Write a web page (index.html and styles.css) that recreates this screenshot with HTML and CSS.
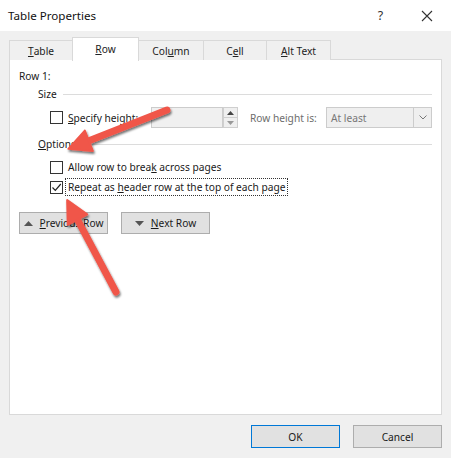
FILE: index.html
```html
<!DOCTYPE html>
<html>
<head>
<meta charset="utf-8">
<link rel="stylesheet" href="styles.css">
</head>
<body>
<div class="window">
  <div class="titlebar">
    <span class="title">Table Properties</span>
    <span class="help">?</span>
    <span class="close">
      <svg width="12" height="12" viewBox="0 0 12 12"><path d="M1 1 L11 11 M11 1 L1 11" stroke="#333" stroke-width="1.1" fill="none"/></svg>
    </span>
  </div>
  <div class="client">
    <div class="tabs">
      <div class="tab t1"><u>T</u>able</div>
      <div class="tab t2 active"><u>R</u>ow</div>
      <div class="tab t3">Col<u>u</u>mn</div>
      <div class="tab t4">C<u>e</u>ll</div>
      <div class="tab t5"><u>A</u>lt Text</div>
    </div>
    <div class="panel">
      <div class="line rowlabel">Row 1:</div>
      <div class="group"><span>Size</span><span class="rule"></span></div>
      <div class="sizerow">
        <span class="check"></span>
        <span class="lbl"><u>S</u>pecify height:</span>
        <span class="numbox"></span>
        <span class="spin">
          <span class="spinbtn"><svg width="7" height="4" viewBox="0 0 7 4"><path d="M0 4 L3.5 0 L7 4Z" fill="#444"/></svg></span>
          <span class="spinbtn"><svg width="7" height="4" viewBox="0 0 7 4"><path d="M0 0 L3.5 4 L7 0Z" fill="#999"/></svg></span>
        </span>
        <span class="dim">Row height is:</span>
        <span class="select">
          <span class="seltext">At least</span>
          <span class="selbtn"><svg width="8" height="5" viewBox="0 0 8 5"><path d="M0.5 0.5 L4 4 L7.5 0.5" stroke="#777" fill="none"/></svg></span>
        </span>
      </div>
      <div class="group options"><span><u>O</u>ptions</span><span class="rule"></span></div>
      <div class="optrow first">
        <span class="check"></span>
        <span class="lbl">Allow row to brea<u>k</u> across pages</span>
      </div>
      <div class="optrow">
        <span class="check checked"><svg width="11" height="11" viewBox="0 0 11 11"><path d="M1.5 5.5 L4.3 8.3 L9.8 2" stroke="#222" stroke-width="1.2" fill="none"/></svg></span>
        <span class="lbl focus">Repeat as <u>h</u>eader row at the top of each page</span>
      </div>
      <div class="navrow">
        <button class="btn nav"><svg width="9" height="5" viewBox="0 0 9 5"><path d="M0 5 L4.5 0 L9 5Z" fill="#555"/></svg><span><u>P</u>revious Row</span></button>
        <button class="btn nav"><svg width="9" height="5" viewBox="0 0 9 5"><path d="M0 0 L4.5 5 L9 0Z" fill="#555"/></svg><span><u>N</u>ext Row</span></button>
      </div>
    </div>
    <div class="footer">
      <button class="btn dlg default">OK</button>
      <button class="btn dlg">Cancel</button>
    </div>
  </div>
  <svg class="arrows" width="451" height="458" viewBox="0 0 451 458">
    <defs>
      <filter id="sh" x="-20%" y="-20%" width="140%" height="140%">
        <feDropShadow dx="1" dy="2" stdDeviation="1.3" flood-color="#000" flood-opacity="0.55"/>
      </filter>
    </defs>
    <g filter="url(#sh)" fill="#f0564a" stroke="#f0564a">
      <g transform="translate(167,110) rotate(158.5)">
        <line x1="0" y1="0" x2="90" y2="0" stroke-width="7" stroke-linecap="round"/>
        <polygon points="106,0 84,-11 84,11" stroke-width="2" stroke-linejoin="round"/>
      </g>
      <g transform="translate(116,292) rotate(-118)">
        <line x1="0" y1="0" x2="88" y2="0" stroke-width="7" stroke-linecap="round"/>
        <polygon points="104,0 82,-11 82,11" stroke-width="2" stroke-linejoin="round"/>
      </g>
    </g>
  </svg>
</div>
</body>
</html>
```

FILE: styles.css
```css
html, body {
  margin: 0;
  padding: 0;
}
body {
  width: 451px;
  height: 458px;
  overflow: hidden;
  font-family: "Noto Sans", "Open Sans", sans-serif;
  font-size: 10.2px;
  color: #1a1a1a;
}
.window {
  position: relative;
  width: 451px;
  height: 458px;
  background: #f0f0f0;
}
.titlebar {
  height: 31px;
  background: #fff;
  display: flex;
  align-items: center;
  padding-left: 8px;
}
.title {
  font-size: 11.6px;
  flex: 1;
  color: #111;
}
.help {
  font-size: 12.5px;
  color: #333;
  width: 45px;
  text-align: center;
}
.close {
  width: 48px;
  display: flex;
  justify-content: center;
  align-items: center;
}
.client {
  padding: 6px 9px 0 9px;
}
.tabs {
  display: flex;
  height: 23px;
  align-items: flex-end;
  margin-bottom: -1px;
  position: relative;
}
.tab {
  height: 20px;
  box-sizing: border-box;
  border: 1px solid #d9d9d9;
  border-bottom: none;
  margin-right: -1px;
  background: #f0f0f0;
  display: flex;
  align-items: center;
  justify-content: center;
  color: #222;
  padding-top: 1px;
}
.t1 { width: 64px; }
.t2 { width: 67px; }
.t3 { width: 66px; }
.t4 { width: 64px; }
.t5 { width: 65px; }
.tab.active {
  background: #fff;
  padding-bottom: 2px;
  z-index: 1;
  height: 24px;
  margin-bottom: -1px;
}
.panel {
  height: 356px;
  box-sizing: border-box;
  background: #fff;
  border: 1px solid #d9d9d9;
  padding: 8px 9px 0 9px;
}
.line {
  height: 16px;
  display: flex;
  align-items: center;
}
.group {
  display: flex;
  align-items: center;
  height: 16px;
  margin-top: 2px;
  padding-left: 19px;
}
.group .rule {
  flex: 1;
  height: 1px;
  background: #dcdcdc;
  margin-left: 6px;
}
.group.options {
  margin-top: 8px;
}
.sizerow {
  display: flex;
  align-items: center;
  height: 21px;
  margin-top: 5px;
  padding-left: 31px;
}
.check {
  width: 13px;
  height: 13px;
  box-sizing: border-box;
  border: 1px solid #333;
  background: #fff;
  display: inline-flex;
  align-items: center;
  justify-content: center;
  flex: none;
}
.lbl {
  margin-left: 5px;
}
.sizerow .lbl {
  width: 83px;
}
.numbox {
  width: 72px;
  height: 21px;
  box-sizing: border-box;
  border: 1px solid #cccccc;
  background: #f0f0f0;
}
.spin {
  width: 15px;
  height: 21px;
  display: flex;
  flex-direction: column;
}
.spinbtn {
  flex: 1;
  border: 1px solid #cfcfcf;
  background: #efefef;
  display: flex;
  align-items: center;
  justify-content: center;
}
.spinbtn + .spinbtn {
  border-top: none;
}
.dim {
  color: #6d6d6d;
  margin-left: 12px;
  width: 76px;
}
.select {
  width: 106px;
  height: 21px;
  box-sizing: border-box;
  border: 1px solid #cccccc;
  background: #efefef;
  display: flex;
  align-items: center;
}
.seltext {
  flex: 1;
  color: #777;
  padding-left: 4px;
}
.selbtn {
  width: 17px;
  height: 19px;
  border-left: 1px solid #cccccc;
  display: flex;
  align-items: center;
  justify-content: center;
}
.optrow {
  display: flex;
  align-items: center;
  height: 16px;
  margin-top: 4px;
  padding-left: 31px;
}
.optrow.first {
  margin-top: 7px;
}
.focus {
  outline: 1px dotted #333;
  outline-offset: 1px;
  margin-left: 4px;
  padding: 0 1px;
}
.navrow {
  display: flex;
  gap: 13px;
  margin-top: 17px;
}
.btn {
  font-family: inherit;
  font-size: 10.2px;
  color: #1a1a1a;
  background: #e1e1e1;
  border: 1px solid #adadad;
  box-sizing: border-box;
  padding: 0;
  margin: 0;
}
.nav {
  width: 89px;
  height: 22px;
  display: flex;
  align-items: center;
  justify-content: center;
  gap: 7px;
}
.footer {
  display: flex;
  justify-content: flex-end;
  gap: 13px;
  padding-top: 10px;
}
.dlg {
  width: 89px;
  height: 23px;
}
.dlg.default {
  border: 1px solid #0078d7;
}
.arrows {
  position: absolute;
  left: 0;
  top: 0;
  pointer-events: none;
}
```
